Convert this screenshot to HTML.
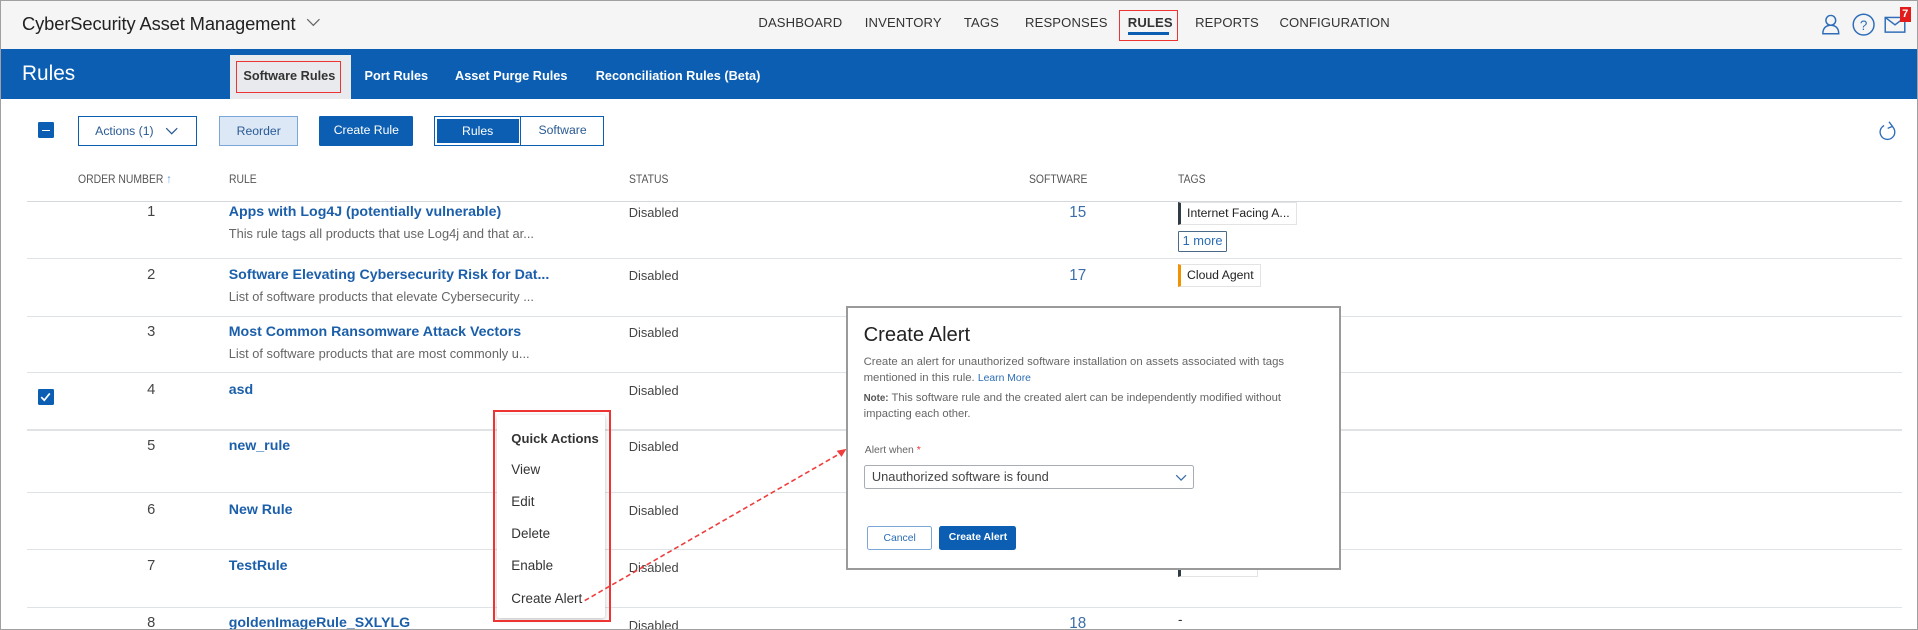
<!DOCTYPE html>
<html><head><meta charset="utf-8">
<style>
html,body{margin:0;padding:0;background:#fff;overflow:hidden}
#w{position:relative;width:1568px;height:515px;zoom:1.22321;font-family:"Liberation Sans",Arial,sans-serif;color:#333;overflow:hidden;background:#fff}
.a{position:absolute;white-space:nowrap}
.nav{font-size:10.7px;color:#333;top:12px;letter-spacing:.1px}
.tab{font-size:10.4px;color:#fff;top:56px;font-weight:bold}
.btn{position:absolute;box-sizing:border-box;font-size:10px;text-align:center;line-height:23px;height:24px;top:95px}
.th{font-size:10px;color:#555;top:141px;transform:scaleX(.85);transform-origin:left}
.line{position:absolute;left:22px;width:1533px;height:1px;background:#e0e3e6}
.num{font-size:12px;color:#444;width:20px;text-align:right;left:107px}
.ttl{font-size:11.6px;font-weight:bold;color:#1b5fab;left:187px}
.dsc{font-size:10.5px;color:#666;left:187px}
.st{font-size:10.5px;color:#444;left:514px}
.sw{font-size:12.5px;color:#3b6ea8;width:40px;text-align:right;left:848px}
.mi{font-size:11px;color:#333;left:418px}
</style></head><body>
<div id="w">
<div class="a" style="left:0;top:0;width:1568px;height:40px;background:#f5f5f5"></div>
<div class="a" style="left:18px;top:11px;font-size:15px;color:#222;letter-spacing:-.1px">CyberSecurity Asset Management</div>
<svg class="a" style="left:250px;top:15px" width="12" height="8"><path d="M1 1l5 5 5-5" fill="none" stroke="#666" stroke-width="1"/></svg>
<div class="a nav" style="left:620px">DASHBOARD</div>
<div class="a nav" style="left:707px">INVENTORY</div>
<div class="a nav" style="left:788px">TAGS</div>
<div class="a nav" style="left:838px">RESPONSES</div>
<div class="a nav" style="left:922px;font-weight:bold">RULES</div>
<div class="a" style="left:922px;top:26px;width:34px;height:3px;background:#0b5eb2"></div>
<div class="a" style="left:915px;top:8px;width:46px;height:24px;border:1.5px solid #e33"></div>
<div class="a nav" style="left:977px">REPORTS</div>
<div class="a nav" style="left:1046px">CONFIGURATION</div>
<svg class="a" style="left:1489px;top:11px" width="16" height="18"><circle cx="8" cy="6" r="4" fill="none" stroke="#2f6db8" stroke-width="1.2"/><path d="M1.5 17c0-5 3-7 6.5-7s6.5 2 6.5 7z" fill="none" stroke="#2f6db8" stroke-width="1.2"/></svg>
<svg class="a" style="left:1514px;top:11px" width="19" height="19"><circle cx="9.5" cy="9.5" r="8.5" fill="none" stroke="#2f6db8" stroke-width="1.2"/><text x="9.5" y="14" font-size="11" text-anchor="middle" fill="#2f6db8" font-family="Liberation Sans">?</text></svg>
<svg class="a" style="left:1540px;top:12px" width="18" height="16"><rect x="1" y="2" width="16" height="12" fill="none" stroke="#2f6db8" stroke-width="1.2"/><path d="M1 2l8 6 8-6" fill="none" stroke="#2f6db8" stroke-width="1.2"/></svg>
<div class="a" style="left:1553px;top:6px;width:9px;height:12px;background:#e31b1b;color:#fff;font-size:9px;font-weight:bold;text-align:center;line-height:12px">7</div>
<div class="a" style="left:0;top:40px;width:1568px;height:41px;background:#0b5eb2"></div>
<div class="a" style="left:18px;top:51px;font-size:17px;color:#fff">Rules</div>
<div class="a" style="left:188px;top:45px;width:99px;height:36px;background:#e8eaed"></div>
<div class="a" style="left:193px;top:50px;width:84px;height:24px;border:1.5px solid #e33"></div>
<div class="a tab" style="left:199px;color:#333">Software Rules</div>
<div class="a tab" style="left:298px">Port Rules</div>
<div class="a tab" style="left:372px">Asset Purge Rules</div>
<div class="a tab" style="left:487px">Reconciliation Rules (Beta)</div>
<div class="a" style="left:31px;top:100px;width:13px;height:13px;background:#0b5eb2;border-radius:1px"><div style="position:absolute;left:3px;top:6px;width:7px;height:1.5px;background:#fff"></div></div>
<div class="btn" style="left:64px;width:97px;border:1px solid #0b5eb2;color:#2a5a95;background:#fff;text-align:left;padding-left:13px">Actions (1)<svg style="position:absolute;left:70px;top:8px" width="11" height="7"><path d="M1 1l4.5 4.5 4.5-4.5" fill="none" stroke="#2a5a95" stroke-width="1"/></svg></div>
<div class="btn" style="left:179px;width:65px;border:1px solid #7aa7d8;background:#dce8f5;color:#2a5a95">Reorder</div>
<div class="btn" style="left:261px;width:77px;background:#0b5eb2;color:#fff;border-radius:1px;line-height:24px">Create Rule</div>
<div class="btn" style="left:355px;width:139px;border:1px solid #0b5eb2;background:#fff"></div>
<div class="btn" style="left:357px;top:97px;height:20px;line-height:21px;width:67px;background:#0b5eb2;color:#fff">Rules</div>
<div class="btn" style="left:425px;width:69px;color:#2a5a95;border-left:1px solid #0b5eb2">Software</div>
<svg class="a" style="left:1535px;top:98px" width="16" height="18"><path d="M11.5 5.2A6 6 0 1 1 5 4.5" fill="none" stroke="#2f6db8" stroke-width="1.1"/><path d="M9 1.5l2.8 3.7-3.9 1.6" fill="none" stroke="#2f6db8" stroke-width="1.1"/></svg>
<div class="a th" style="left:64px">ORDER NUMBER <span style="color:#6a9fd8">↑</span></div>
<div class="a th" style="left:187px">RULE</div>
<div class="a th" style="left:514px">STATUS</div>
<div class="a th" style="left:841px">SOFTWARE</div>
<div class="a th" style="left:963px">TAGS</div>
<div class="line" style="top:164px;background:#d5d8dc"></div>
<div class="a num" style="top:167px">1</div><div class="a ttl" style="top:167px">Apps with Log4J (potentially vulnerable)</div><div class="a dsc" style="top:185px">This rule tags all products that use Log4j and that ar...</div><div class="a st" style="top:168px">Disabled</div><div class="a sw" style="top:167px">15</div>
<div class="a" style="left:963px;top:165px;height:17px;border:1px solid #e3e3e3;border-left:3px solid #2f3b45;font-size:10px;line-height:17px;padding:0 5px;color:#222">Internet Facing A...</div>
<div class="a" style="left:963px;top:189px;height:15px;border:1px solid #4a6a88;font-size:10.5px;line-height:15px;padding:0 3px;color:#2a6db5;border-radius:1px">1 more</div>
<div class="line" style="top:211px"></div>
<div class="a num" style="top:218px">2</div><div class="a ttl" style="top:218px">Software Elevating Cybersecurity Risk for Dat...</div><div class="a dsc" style="top:236px">List of software products that elevate Cybersecurity ...</div><div class="a st" style="top:219px">Disabled</div><div class="a sw" style="top:218px">17</div>
<div class="a" style="left:963px;top:216px;height:17px;border:1px solid #e3e3e3;border-left:3px solid #f39200;font-size:10px;line-height:17px;padding:0 5px;color:#222">Cloud Agent</div>
<div class="line" style="top:258px"></div>
<div class="a num" style="top:265px">3</div><div class="a ttl" style="top:265px">Most Common Ransomware Attack Vectors</div><div class="a dsc" style="top:283px">List of software products that are most commonly u...</div><div class="a st" style="top:266px">Disabled</div>
<div class="line" style="top:304px"></div>
<div class="a" style="left:31px;top:318px;width:13px;height:13px;background:#0b5eb2;border-radius:1px"><svg style="position:absolute;left:2px;top:2px" width="9" height="9"><path d="M1 5l2.5 2.5L8 2" fill="none" stroke="#fff" stroke-width="1.4"/></svg></div>
<div class="a num" style="top:312px">4</div><div class="a ttl" style="top:312px">asd</div><div class="a st" style="top:313px">Disabled</div>
<div class="line" style="top:351px"></div>
<div class="a num" style="top:358px">5</div><div class="a ttl" style="top:358px">new_rule</div><div class="a st" style="top:359px">Disabled</div>
<div class="line" style="top:402px"></div>
<div class="a num" style="top:410px">6</div><div class="a ttl" style="top:410px">New Rule</div><div class="a st" style="top:411px">Disabled</div>
<div class="line" style="top:449px"></div>
<div class="a num" style="top:456px">7</div><div class="a ttl" style="top:456px">TestRule</div><div class="a st" style="top:458px">Disabled</div>
<div class="a" style="left:963px;top:462px;width:62px;height:8px;border:1px solid #e3e3e3;border-left:3px solid #2f3b45"></div>
<div class="line" style="top:496px"></div>
<div class="a num" style="top:503px">8</div><div class="a ttl" style="top:503px">goldenImageRule_SXLYLG</div><div class="a st" style="top:505px">Disabled</div><div class="a sw" style="top:503px">18</div><div class="a" style="left:963px;top:500px;font-size:11px">-</div>
<div class="a" style="left:406px;top:339px;width:89px;height:166px;background:#fff;box-shadow:0 1px 4px rgba(0,0,0,.25);border-radius:2px"></div>
<div class="a" style="left:403px;top:335px;width:93px;height:170px;border:2px solid #e33"></div>
<div class="a mi" style="top:352px;font-weight:bold;font-size:10.7px">Quick Actions</div>
<div class="a mi" style="top:378px">View</div>
<div class="a mi" style="top:404px">Edit</div>
<div class="a mi" style="top:430px">Delete</div>
<div class="a mi" style="top:456px">Enable</div>
<div class="a mi" style="top:483px">Create Alert</div>
<div class="a" style="left:692px;top:250px;width:401px;height:213px;background:#fff;border:2px solid #9a9a9a"></div>
<div class="a" style="left:706px;top:265px;font-size:16.5px;color:#222">Create Alert</div>
<div class="a" style="left:706px;top:290px;font-size:9.3px;color:#666;line-height:13px;white-space:normal;width:370px">Create an alert for unauthorized software installation on assets associated with tags mentioned in this rule. <span style="color:#2a6db5;font-size:8.5px">Learn More</span></div>
<div class="a" style="left:706px;top:320px;font-size:9.2px;color:#666;line-height:13px;white-space:normal;width:362px"><b style="font-size:8px;color:#555">Note:</b> This software rule and the created alert can be independently modified without impacting each other.</div>
<div class="a" style="left:707px;top:364px;font-size:8.5px;color:#666">Alert when <span style="color:#e33">*</span></div>
<div class="a" style="left:706px;top:380px;width:270px;height:20px;box-sizing:border-box;border:1px solid #a8adb3;border-radius:2px;font-size:10.5px;line-height:18px;padding-left:6px;color:#444">Unauthorized software is found<svg style="position:absolute;right:5px;top:7px" width="10" height="6"><path d="M1 1l4 4 4-4" fill="none" stroke="#3a6ea8" stroke-width="1"/></svg></div>
<div class="a" style="left:709px;top:430px;width:53px;height:20px;box-sizing:border-box;border:1px solid #7aa7d8;border-radius:2px;font-size:8.5px;line-height:19px;text-align:center;color:#2a6db5">Cancel</div>
<div class="a" style="left:768px;top:430px;width:63px;height:20px;background:#0b5eb2;border-radius:2px;font-size:8.5px;line-height:20px;text-align:center;color:#fff;font-weight:bold">Create Alert</div>
<svg class="a" style="left:0;top:0" width="1568" height="515"><line x1="478" y1="491" x2="688" y2="370" stroke="#f03c3c" stroke-width="1.3" stroke-dasharray="4,2.5"/><path d="M692 367l-8 1.5 4 5z" fill="#f03c3c"/></svg>
<div class="a" style="left:0;top:0;width:1566px;height:513px;border:1px solid #a0a0a0"></div>
</div>
</body></html>
